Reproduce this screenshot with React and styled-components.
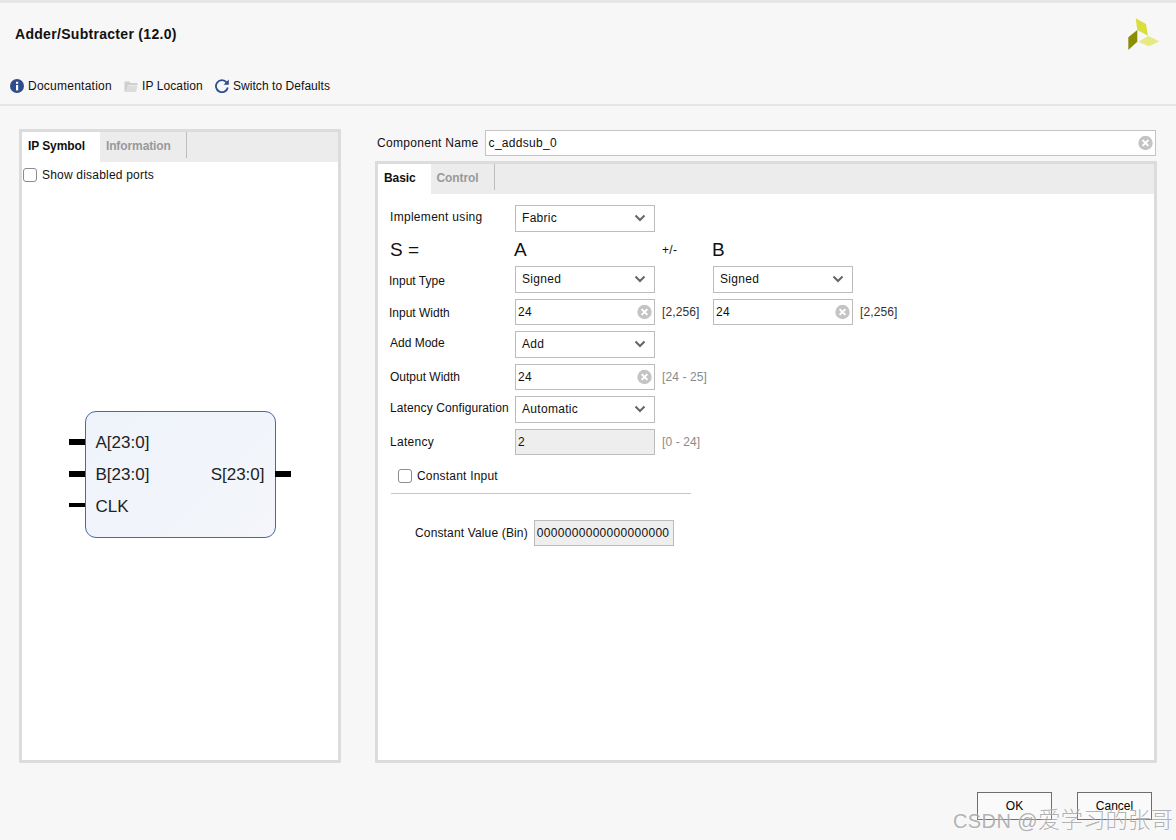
import styled, { createGlobalStyle } from "styled-components";

const GlobalStyle = createGlobalStyle`
  html, body {
    margin: 0;
    padding: 0;
    background: #f7f7f7;
  }
  * {
    box-sizing: border-box;
  }
`;

const Page = styled.div`
  position: relative;
  width: 1176px;
  height: 840px;
  overflow: hidden;
  display: flex;
  flex-direction: column;
  background: #f7f7f7;
  border-top: 3px solid #e6e6e6;
  font-family: "Liberation Sans", Arial, sans-serif;
  font-size: 12px;
  letter-spacing: 0.3px;
  color: #111;
`;

const Header = styled.header`
  height: 103px;
  flex-shrink: 0;
  display: flex;
  flex-direction: column;
  border-bottom: 2px solid #e6e6e6;
`;

const TitleRow = styled.div`
  height: 68px;
  display: flex;
  justify-content: space-between;
  padding: 15px 16px 0 15px;
`;

const Title = styled.h1`
  margin: 8px 0 0;
  font-size: 14px;
  line-height: 16px;
  font-weight: 700;
  letter-spacing: 0.3px;
`;

const Toolbar = styled.div`
  display: flex;
  align-items: center;
  gap: 12px;
  padding: 7px 0 0 10px;
`;

const ToolItem = styled.div`
  display: flex;
  align-items: center;
  gap: 4px;
  line-height: 16px;
  white-space: nowrap;
  letter-spacing: ${({ $tracking }) => $tracking}px;
`;

const Body = styled.main`
  flex: 1;
  min-height: 0;
  display: flex;
  gap: 34px;
  padding: 23px 19px 0;
`;

const Panel = styled.section`
  display: flex;
  flex-direction: column;
  background: #fff;
  border: 3px solid #dcdcdc;
  height: ${({ $height }) => $height}px;
  width: ${({ $width }) => $width}px;
`;

const RightColumn = styled.div`
  padding-top: 1px;
  display: flex;
  flex-direction: column;
  gap: 5px;
`;

const TabBar = styled.div`
  height: 30px;
  flex-shrink: 0;
  display: flex;
  background: #ececec;
`;

const ActiveTab = styled.div`
  height: 30px;
  display: flex;
  align-items: center;
  padding: 0 15px 2px 6px;
  font-weight: 700;
  letter-spacing: -0.1px;
  color: #111;
  background: #fff;
`;

const Tab = styled.div`
  height: 26px;
  display: flex;
  align-items: center;
  padding: 1px 15px 0 6px;
  font-weight: 700;
  letter-spacing: -0.1px;
  color: #999;
  border-right: 1px solid #bdbdbd;
`;

const CheckRow = styled.label`
  display: flex;
  align-items: center;
  gap: 5px;
  line-height: 16px;
  letter-spacing: 0.2px;
  height: 25px;
  padding-left: ${({ $indent }) => $indent}px;
`;

const CheckBox = styled.span`
  width: 14px;
  height: 14px;
  flex-shrink: 0;
  background: #fff;
  border: 1.5px solid #8c8c8c;
  border-radius: 3px;
`;

const SymbolArea = styled.div`
  flex: 1;
  display: flex;
  align-items: center;
  justify-content: center;
  padding-top: 2px;
`;

const SymbolBox = styled.div`
  width: 191px;
  height: 127px;
  display: flex;
  flex-direction: column;
  gap: 10px;
  padding: 20px 10px 0 10px;
  border: 1px solid #4a68a4;
  border-radius: 11px;
  background: linear-gradient(135deg, #eef3fb, #f4f6fa);
`;

const SymbolRow = styled.div`
  position: relative;
  height: 22px;
  display: flex;
  justify-content: space-between;
  align-items: center;
  font-size: 17px;
  letter-spacing: 0;
  color: #222;
`;

const Pin = styled.i`
  position: absolute;
  top: 7px;
  height: ${({ $thin }) => ($thin ? 4 : 6)}px;
  width: 16px;
  background: #000;
  ${({ $side }) => ($side === "right" ? "right: -26px;" : "left: -27px;")}
`;

const NameRow = styled.div`
  height: 26px;
  display: flex;
  align-items: center;
  gap: 6px;
  padding-left: 2px;
`;

const NameInput = styled.div`
  position: relative;
  width: 671px;
  height: 26px;
  display: flex;
  align-items: center;
  padding-left: 3px;
  background: #fff;
  border: 1px solid #c4c4c4;
`;

const ClearSlot = styled.span`
  position: absolute;
  right: 2px;
  top: 50%;
  transform: translateY(-50%);
  display: flex;
`;

const Form = styled.div`
  display: grid;
  grid-template-columns: 125px 140px 58px 140px auto;
  grid-template-rows: 27px 22px 27px 26px 27px 26px 27px 26px;
  row-gap: 6px;
  justify-content: start;
  align-items: center;
  padding: 11px 0 0 12px;
`;

// $raise and $drop nudge a label off the centre of its row, as the reference does
const Label = styled.div`
  grid-column: 1;
  white-space: nowrap;
  line-height: 16px;
  letter-spacing: ${({ $tracking }) => $tracking ?? 0.3}px;
  margin-bottom: ${({ $raise }) => $raise || 0}px;
  margin-top: ${({ $drop }) => $drop || 0}px;
  margin-left: ${({ $outdent }) => ($outdent ? -1 : 0)}px;
`;

const BigText = styled.div`
  font-size: 19px;
  letter-spacing: 0;
  line-height: 22px;
  padding-top: 2px;
  margin-left: ${({ $outdent }) => ($outdent ? -1 : 0)}px;
`;

const Select = styled.div`
  height: 27px;
  display: flex;
  align-items: center;
  justify-content: space-between;
  padding: 0 8px 2px 6px;
  background: #fff;
  border: 1px solid #bcbcbc;
`;

const ValueInput = styled.div`
  position: relative;
  height: 26px;
  display: flex;
  align-items: center;
  padding: 0 0 1px 2px;
  overflow: hidden;
  white-space: nowrap;
  background: ${({ $disabled }) => ($disabled ? "#eeeeee" : "#fff")};
  border: 1px solid #bcbcbc;
`;

const Range = styled.div`
  padding-left: 7px;
  white-space: nowrap;
  letter-spacing: 0.1px;
  color: ${({ $muted }) => ($muted ? "#8a8a8a" : "#333")};
`;

const PlusMinus = styled.div`
  padding: 2px 0 0 7px;
`;

const ConstantSection = styled.div`
  padding: 8px 0 0 13px;
  display: flex;
  flex-direction: column;
`;

const Separator = styled.hr`
  width: 300px;
  height: 1px;
  margin: 5px 0 26px;
  border: 0;
  background: #c8c8c8;
`;

const ConstantRow = styled.div`
  display: flex;
  align-items: center;
  gap: 6px;
  padding-left: 24px;
  letter-spacing: 0.15px;
`;

const ConstantValue = styled(ValueInput)`
  width: 140px;
  letter-spacing: 0.3px;
`;

const Footer = styled.footer`
  height: 28px;
  flex-shrink: 0;
  margin: 26px 0 20px;
  display: flex;
  justify-content: flex-end;
  gap: 25px;
  padding-right: 24px;
`;

const Button = styled.button`
  width: 75px;
  height: 28px;
  padding: 0 0 1px;
  font: inherit;
  letter-spacing: 0;
  color: #000;
  background: #fafafa;
  border: 1px solid #6e6e6e;
`;

const Watermark = styled.div`
  position: absolute;
  left: 953px;
  top: 805px;
  white-space: nowrap;
  font-family: "Liberation Sans", "Noto Sans CJK SC", sans-serif;
  font-size: 20px;
  line-height: 26px;
  letter-spacing: 0.4px;
  color: rgba(130, 130, 130, 0.62);
  text-shadow: 0 0 2px rgba(255, 255, 255, 0.9);
`;

const WatermarkName = styled.span`
  font-size: 22.5px;
  letter-spacing: 0;
  font-weight: 300;
`;

const InfoIcon = () => (
  <svg width="14" height="14" viewBox="0 0 14 14">
    <circle cx="7" cy="7" r="7" fill="#2f4d8c" />
    <rect x="6" y="6" width="2.2" height="5.4" fill="#fff" />
    <rect x="6" y="2.8" width="2.2" height="2" fill="#fff" />
  </svg>
);

const FolderIcon = () => (
  <svg width="14" height="14" viewBox="0 0 14 14">
    <path d="M0.5 2.5h5l1 1.5h7v2h-9l-2 6.5h-2z" fill="#cfcfcf" />
    <path d="M3.5 6.5h10l-1.5 6.5H1.5z" fill="#dcdcdc" />
  </svg>
);

const RefreshIcon = () => (
  <svg width="14" height="14" viewBox="0 0 14 14" fill="none">
    <path d="M11.6 3.4A6 6 0 1 0 12.8 8.5" stroke="#2f4d8c" strokeWidth="1.8" />
    <path d="M13.8 0.6v5.2H8.6z" fill="#2f4d8c" />
  </svg>
);

const ClearIcon = () => (
  <svg width="15" height="15" viewBox="0 0 15 15">
    <circle cx="7.5" cy="7.5" r="7.2" fill="#c4c4c4" />
    <path d="M4.6 4.6l5.8 5.8M10.4 4.6l-5.8 5.8" stroke="#fff" strokeWidth="2" />
  </svg>
);

const ChevronIcon = () => (
  <svg width="12" height="8" viewBox="0 0 12 8" fill="none">
    <path d="M1.5 1.5L6 6l4.5-4.5" stroke="#666" strokeWidth="2" />
  </svg>
);

const Logo = () => (
  <svg width="32" height="32" viewBox="0 0 32 32">
    <polygon points="7.7,0.3 18,6 20,17.7 9.3,12" fill="#d9de3c" />
    <polygon points="9.3,12 9.3,23.7 0.3,32 0.3,19.3" fill="#8a8f00" />
    <polygon points="10.3,23.7 20.3,18 31.3,23.3 21,28.3" fill="#e6ea82" />
  </svg>
);

function Dropdown({ children }) {
  return (
    <Select>
      {children}
      <ChevronIcon />
    </Select>
  );
}

function ClearableInput({ children }) {
  return (
    <ValueInput>
      {children}
      <ClearSlot>
        <ClearIcon />
      </ClearSlot>
    </ValueInput>
  );
}

export default function App() {
  return (
    <Page>
      <GlobalStyle />
      <Header>
        <TitleRow>
          <Title>Adder/Subtracter (12.0)</Title>
          <Logo />
        </TitleRow>
        <Toolbar>
          <ToolItem $tracking={0.25}>
            <InfoIcon />
            Documentation
          </ToolItem>
          <ToolItem $tracking={0.1}>
            <FolderIcon />
            IP Location
          </ToolItem>
          <ToolItem $tracking={0.06}>
            <RefreshIcon />
            Switch to Defaults
          </ToolItem>
        </Toolbar>
      </Header>

      <Body>
        <Panel $width={322} $height={634}>
          <TabBar>
            <ActiveTab>IP Symbol</ActiveTab>
            <Tab>Information</Tab>
          </TabBar>
          <CheckRow $indent={1}>
            <CheckBox />
            Show disabled ports
          </CheckRow>
          <SymbolArea>
            <SymbolBox>
              <SymbolRow>
                <Pin />
                A[23:0]
              </SymbolRow>
              <SymbolRow>
                <Pin />
                <span>B[23:0]</span>
                <span>S[23:0]</span>
                <Pin $side="right" />
              </SymbolRow>
              <SymbolRow>
                <Pin $thin />
                CLK
              </SymbolRow>
            </SymbolBox>
          </SymbolArea>
        </Panel>

        <RightColumn>
          <NameRow>
            Component Name
            <NameInput>
              c_addsub_0
              <ClearSlot>
                <ClearIcon />
              </ClearSlot>
            </NameInput>
          </NameRow>
          <Panel $width={782} $height={602}>
            <TabBar>
              <ActiveTab>Basic</ActiveTab>
              <Tab>Control</Tab>
            </TabBar>
            <Form>
              <Label $raise={4}>Implement using</Label>
              <Dropdown>Fabric</Dropdown>
              <span />
              <span />
              <span />

              <BigText>S =</BigText>
              <BigText $outdent>A</BigText>
              <PlusMinus>+/-</PlusMinus>
              <BigText $outdent>B</BigText>
              <span />

              <Label $drop={2} $outdent $tracking={0}>Input Type</Label>
              <Dropdown>Signed</Dropdown>
              <span />
              <Dropdown>Signed</Dropdown>
              <span />

              <Label $drop={2} $outdent $tracking={0}>Input Width</Label>
              <ClearableInput>24</ClearableInput>
              <Range>[2,256]</Range>
              <ClearableInput>24</ClearableInput>
              <Range>[2,256]</Range>

              <Label $raise={3} $tracking={0}>Add Mode</Label>
              <Dropdown>Add</Dropdown>
              <span />
              <span />
              <span />

              <Label $tracking={0}>Output Width</Label>
              <ClearableInput>24</ClearableInput>
              <Range $muted>[24 - 25]</Range>
              <span />
              <span />

              <Label $raise={3} $tracking={0.1}>Latency Configuration</Label>
              <Dropdown>Automatic</Dropdown>
              <span />
              <span />
              <span />

              <Label $raise={1}>Latency</Label>
              <ValueInput $disabled>2</ValueInput>
              <Range $muted>[0 - 24]</Range>
            </Form>
            <ConstantSection>
              <CheckRow $indent={7}>
                <CheckBox />
                Constant Input
              </CheckRow>
              <Separator />
              <ConstantRow>
                Constant Value (Bin)
                <ConstantValue $disabled>0000000000000000000</ConstantValue>
              </ConstantRow>
            </ConstantSection>
          </Panel>
        </RightColumn>
      </Body>

      <Footer>
        <Button>OK</Button>
        <Button>Cancel</Button>
      </Footer>
      <Watermark>
        CSDN @<WatermarkName>爱学习的张哥</WatermarkName>
      </Watermark>
    </Page>
  );
}
